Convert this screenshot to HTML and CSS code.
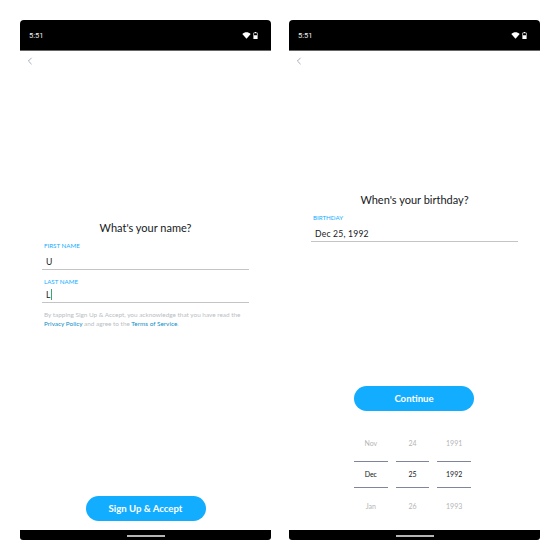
FILE: index.html
```html
<!DOCTYPE html>
<html lang="en">
<head>
  <meta charset="UTF-8">
  <title>Sign up</title>
  <link rel="stylesheet" href="styles.css">
</head>
<body>
  <div class="phones">
    <section class="phone">
      <div class="status-bar">
        <span class="time">5:51</span>
        <span class="status-icons">
          <svg class="wifi" viewBox="0 0 12 10"><path d="M0 2.8C3.4-.6 8.6-.6 12 2.8L6 9.5z" fill="#fff"/></svg>
          <svg class="battery" viewBox="0 0 7 10"><path d="M2.3 0h2.4v1H6.5v9H.5V1h1.8zM1.4 1.9v2.6h4.2V1.9z" fill="#fff" fill-rule="evenodd"/></svg>
        </span>
      </div>
      <svg class="back" viewBox="0 0 6 10"><path d="M5 1 1 5l4 4" fill="none" stroke="#9aa1b2" stroke-width="1.1"/></svg>
      <div class="screen screen-name">
        <h1 class="title">What's your name?</h1>
        <label class="field-label">FIRST NAME</label>
        <div class="field">U</div>
        <label class="field-label">LAST NAME</label>
        <div class="field field-last"><span>L</span><i class="caret"></i></div>
        <p class="legal">By tapping Sign Up &amp; Accept, you acknowledge that you have read the <a>Privacy Policy</a> and agree to the <a>Terms of Service</a>.</p>
        <button class="primary push-down">Sign Up &amp; Accept</button>
      </div>
      <div class="nav-bar"><i class="home-pill"></i></div>
    </section>

    <section class="phone">
      <div class="status-bar">
        <span class="time">5:51</span>
        <span class="status-icons">
          <svg class="wifi" viewBox="0 0 12 10"><path d="M0 2.8C3.4-.6 8.6-.6 12 2.8L6 9.5z" fill="#fff"/></svg>
          <svg class="battery" viewBox="0 0 7 10"><path d="M2.3 0h2.4v1H6.5v9H.5V1h1.8zM1.4 1.9v2.6h4.2V1.9z" fill="#fff" fill-rule="evenodd"/></svg>
        </span>
      </div>
      <svg class="back" viewBox="0 0 6 10"><path d="M5 1 1 5l4 4" fill="none" stroke="#9aa1b2" stroke-width="1.1"/></svg>
      <div class="screen screen-birthday">
        <h1 class="title">When's your birthday?</h1>
        <label class="field-label">BIRTHDAY</label>
        <div class="field">Dec 25, 1992</div>
        <button class="primary continue">Continue</button>
        <div class="picker">
          <div class="wheel">
            <span>Nov</span>
            <span class="selected">Dec</span>
            <span>Jan</span>
          </div>
          <div class="wheel">
            <span>24</span>
            <span class="selected">25</span>
            <span>26</span>
          </div>
          <div class="wheel">
            <span>1991</span>
            <span class="selected">1992</span>
            <span>1993</span>
          </div>
        </div>
      </div>
      <div class="nav-bar"><i class="home-pill"></i></div>
    </section>
  </div>
</body>
</html>
```

FILE: styles.css
```css
body {
  margin: 0;
  background: #fff;
  font-family: "Lato", "Open Sans", sans-serif;
  color: #16191c;
}
.phones {
  display: flex;
  gap: 18px;
  padding: 20px 20px 0;
}
.phone {
  width: 251px;
  height: 520px;
  display: flex;
  flex-direction: column;
}
.status-bar {
  height: 30px;
  flex: none;
  background: #000;
  border-radius: 4px 4px 0 0;
  border-bottom: 1px solid #666;
  display: flex;
  align-items: center;
  justify-content: space-between;
  padding: 0 13px 0 9px;
  color: #eee;
}
.time {
  font-family: "Roboto", sans-serif;
  font-size: 7.5px;
}
.status-icons {
  display: flex;
  align-items: center;
  gap: 2px;
}
.wifi {
  width: 9px;
  height: 7px;
}
.battery {
  width: 5px;
  height: 7px;
}
.back {
  width: 6px;
  height: 8px;
  margin: 6px 0 0 7px;
  flex: none;
}
.screen {
  flex: 1;
  display: flex;
  flex-direction: column;
}
.screen-name {
  padding: 155px 22px 9px;
}
.screen-birthday {
  padding: 127px 22px 0;
}
.title {
  margin: 0 0 5px;
  font-size: 11px;
  font-weight: 400;
  line-height: 16px;
  text-align: center;
}
.field-label {
  display: block;
  padding-left: 2px;
  font-size: 6.2px;
  line-height: 9px;
  color: #12adff;
}
.field {
  height: 15px;
  padding: 3px 0 0 4px;
  margin: 1px 0 7px;
  border-bottom: 1px solid #c4c4c4;
  font-size: 8.6px;
  letter-spacing: 0.2px;
  display: flex;
  align-items: center;
}
.field-last {
  height: 15px;
  padding-top: 1px;
  margin: 0 0 7px;
}
.caret {
  width: 1px;
  height: 11px;
  background: #3aa76d;
}
.legal {
  margin: 0;
  padding-left: 2px;
  font-size: 6.4px;
  line-height: 9px;
  color: #b9bec4;
}
.legal a {
  color: #0f8fc9;
}
.primary {
  display: block;
  align-self: center;
  width: 120px;
  height: 25px;
  border: 0;
  border-radius: 13px;
  background: #12adff;
  color: #fff;
  font-family: inherit;
  font-size: 9.6px;
  font-weight: 700;
}
.push-down {
  margin-top: auto;
}
.continue {
  margin: 137px 0 0 -1px;
}
.picker {
  display: flex;
  justify-content: center;
  gap: 8.3px;
  margin: 13.5px 4px 0 0;
}
.wheel {
  width: 33.4px;
  display: flex;
  flex-direction: column;
  font-size: 7px;
  color: #b5b5b5;
}
.wheel span {
  height: 36px;
  line-height: 36px;
  text-align: center;
}
.wheel .selected {
  height: 25px;
  line-height: 25px;
  color: #16191c;
  border-top: 1px solid #7f8699;
  border-bottom: 1px solid #7f8699;
}
.nav-bar {
  height: 10px;
  flex: none;
  background: #000;
  border-radius: 0 0 3px 3px;
  display: flex;
  justify-content: center;
}
.home-pill {
  width: 38px;
  height: 2px;
  margin-top: 5px;
  background: #b5b5b5;
}
```
